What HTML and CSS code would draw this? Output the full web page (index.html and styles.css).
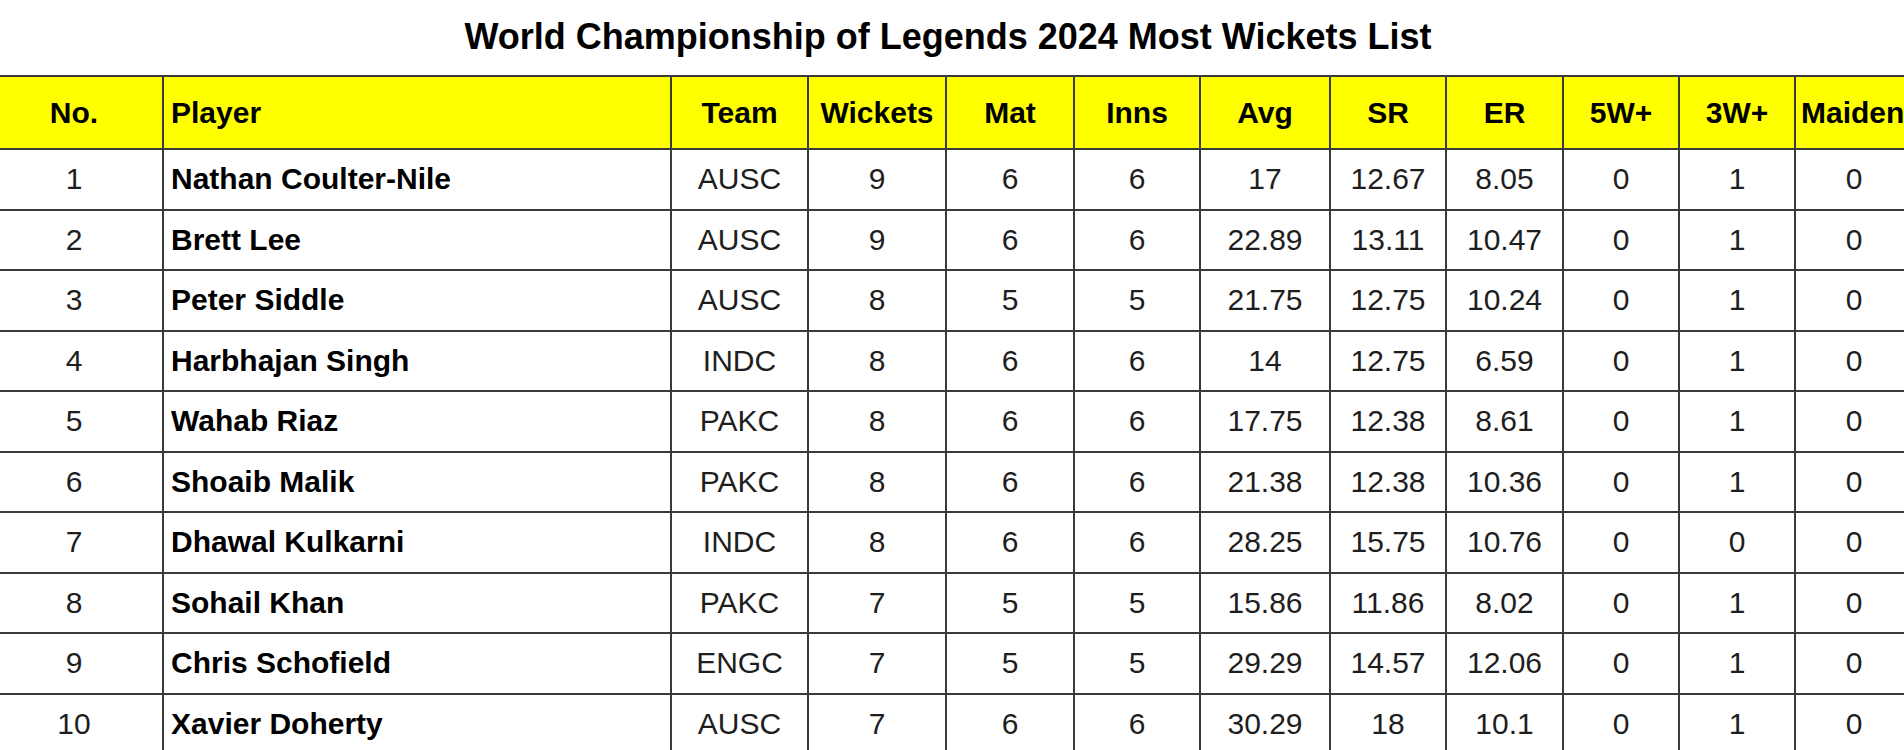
FILE: index.html
```html
<!DOCTYPE html>
<html>
<head>
<meta charset="utf-8">
<link rel="stylesheet" href="styles.css">
</head>
<body>
<div class="wrap">
  <h1 class="title">World Championship of Legends 2024 Most Wickets List</h1>
  <table class="stats">
    <colgroup>
      <col class="c-no"><col class="c-player"><col class="c-team"><col class="c-wkts">
      <col class="c-mat"><col class="c-inns"><col class="c-avg"><col class="c-sr">
      <col class="c-er"><col class="c-5w"><col class="c-3w"><col class="c-maiden">
    </colgroup>
    <thead>
      <tr>
        <th>No.</th><th class="left">Player</th><th>Team</th><th>Wickets</th><th>Mat</th><th>Inns</th><th>Avg</th><th>SR</th><th>ER</th><th>5W+</th><th>3W+</th><th class="maiden">Maiden</th>
      </tr>
    </thead>
    <tbody>
      <tr><td>1</td><td class="name">Nathan Coulter-Nile</td><td>AUSC</td><td>9</td><td>6</td><td>6</td><td>17</td><td>12.67</td><td>8.05</td><td>0</td><td>1</td><td>0</td></tr>
      <tr><td>2</td><td class="name">Brett Lee</td><td>AUSC</td><td>9</td><td>6</td><td>6</td><td>22.89</td><td>13.11</td><td>10.47</td><td>0</td><td>1</td><td>0</td></tr>
      <tr><td>3</td><td class="name">Peter Siddle</td><td>AUSC</td><td>8</td><td>5</td><td>5</td><td>21.75</td><td>12.75</td><td>10.24</td><td>0</td><td>1</td><td>0</td></tr>
      <tr><td>4</td><td class="name">Harbhajan Singh</td><td>INDC</td><td>8</td><td>6</td><td>6</td><td>14</td><td>12.75</td><td>6.59</td><td>0</td><td>1</td><td>0</td></tr>
      <tr><td>5</td><td class="name">Wahab Riaz</td><td>PAKC</td><td>8</td><td>6</td><td>6</td><td>17.75</td><td>12.38</td><td>8.61</td><td>0</td><td>1</td><td>0</td></tr>
      <tr><td>6</td><td class="name">Shoaib Malik</td><td>PAKC</td><td>8</td><td>6</td><td>6</td><td>21.38</td><td>12.38</td><td>10.36</td><td>0</td><td>1</td><td>0</td></tr>
      <tr><td>7</td><td class="name">Dhawal Kulkarni</td><td>INDC</td><td>8</td><td>6</td><td>6</td><td>28.25</td><td>15.75</td><td>10.76</td><td>0</td><td>0</td><td>0</td></tr>
      <tr><td>8</td><td class="name">Sohail Khan</td><td>PAKC</td><td>7</td><td>5</td><td>5</td><td>15.86</td><td>11.86</td><td>8.02</td><td>0</td><td>1</td><td>0</td></tr>
      <tr><td>9</td><td class="name">Chris Schofield</td><td>ENGC</td><td>7</td><td>5</td><td>5</td><td>29.29</td><td>14.57</td><td>12.06</td><td>0</td><td>1</td><td>0</td></tr>
      <tr><td>10</td><td class="name">Xavier Doherty</td><td>AUSC</td><td>7</td><td>6</td><td>6</td><td>30.29</td><td>18</td><td>10.1</td><td>0</td><td>1</td><td>0</td></tr>
    </tbody>
  </table>
</div>
</body>
</html>
```
FILE: styles.css
```css
html, body {
  margin: 0;
  padding: 0;
  overflow: hidden;
  background: #ffffff;
}
body {
  font-family: "Liberation Sans", Arial, sans-serif;
  color: #1e1e1e;
  width: 1904px;
  height: 750px;
}
.wrap {
  margin-left: -16px;
  width: 1928px;
}
.title {
  margin: 16px 0 17px 0;
  font-size: 36px;
  line-height: 42px;
  font-weight: bold;
  text-align: center;
  color: #000;
}
.stats {
  border-collapse: collapse;
  table-layout: fixed;
  width: 1928px;
  font-size: 30px;
}
.c-no { width: 178px; }
.c-player { width: 508px; }
.c-team { width: 137px; }
.c-wkts { width: 138px; }
.c-mat { width: 128px; }
.c-inns { width: 126px; }
.c-avg { width: 130px; }
.c-sr { width: 116px; }
.c-er { width: 117px; }
.c-5w { width: 116px; }
.c-3w { width: 116px; }
.c-maiden { width: 118px; }
.stats th, .stats td {
  border: 2px solid #3a3a3a;
  text-align: center;
  vertical-align: middle;
  padding: 0 4px;
  white-space: nowrap;
  overflow: visible;
}
.stats thead tr { height: 73px; }
.stats tbody tr { height: 60.5px; }
.stats th {
  background: #ffff00;
  color: #000;
  font-weight: bold;
}
.stats th.left, .stats td.name {
  text-align: left;
  padding-left: 7px;
}
.stats th.maiden {
  text-align: left;
  padding-left: 5px;
}
.stats td.name {
  font-weight: bold;
  color: #000;
}
```
